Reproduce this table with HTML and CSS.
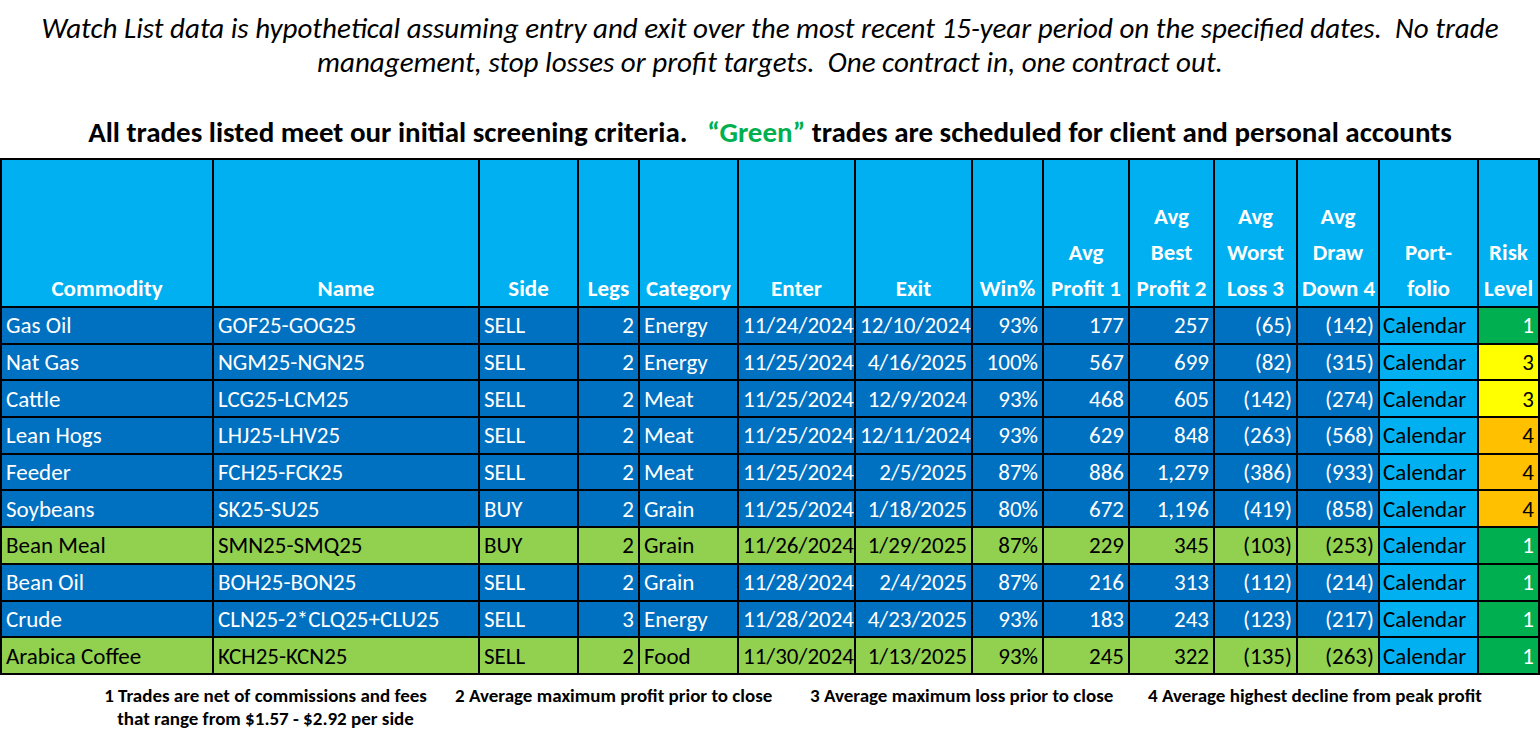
FILE: index.html
```html
<!DOCTYPE html>
<html>
<head>
<meta charset="utf-8">
<link rel="stylesheet" href="styles.css">
</head>
<body>
<div class="page">
  <p class="disclaimer">Watch List data is hypothetical assuming entry and exit over the most recent 15-year period on the specified dates.&nbsp; No trade<br>management, stop losses or profit targets.&nbsp; One contract in, one contract out.</p>
  <p class="headline">All trades listed meet our initial screening criteria.&nbsp;&nbsp; <span class="green-word">“Green”</span> trades are scheduled for client and personal accounts</p>
  <table class="watch">
    <colgroup>
      <col style="width:212px"><col style="width:266px"><col style="width:99px"><col style="width:61px"><col style="width:99px"><col style="width:117px"><col style="width:117px"><col style="width:71px"><col style="width:86px"><col style="width:85px"><col style="width:83px"><col style="width:82px"><col style="width:99px"><col style="width:61px">
    </colgroup>
    <thead>
      <tr>
        <th>Commodity</th><th>Name</th><th>Side</th><th class="thin">Legs</th><th>Category</th><th>Enter</th><th>Exit</th><th>Win%</th><th class="thin">Avg<br>Profit 1</th><th class="thin">Avg<br>Best<br>Profit 2</th><th>Avg<br>Worst<br>Loss 3</th><th class="thin">Avg<br>Draw<br>Down 4</th><th class="thin">Port-<br>folio</th><th>Risk<br>Level</th>
      </tr>
    </thead>
    <tbody>
      <tr class="blue"><td>Gas Oil</td><td>GOF25-GOG25</td><td>SELL</td><td class="r thin">2</td><td>Energy</td><td class="r">11/24/2024</td><td class="r">12/10/2024</td><td class="r">93%</td><td class="r thin">177</td><td class="r thin">257</td><td class="r">(65)</td><td class="r thin">(142)</td><td class="cal thin">Calendar</td><td class="r risk1">1</td></tr>
      <tr class="blue"><td>Nat Gas</td><td>NGM25-NGN25</td><td>SELL</td><td class="r thin">2</td><td>Energy</td><td class="r">11/25/2024</td><td class="r">4/16/2025</td><td class="r">100%</td><td class="r thin">567</td><td class="r thin">699</td><td class="r">(82)</td><td class="r thin">(315)</td><td class="cal thin">Calendar</td><td class="r risk3">3</td></tr>
      <tr class="blue"><td>Cattle</td><td>LCG25-LCM25</td><td>SELL</td><td class="r thin">2</td><td>Meat</td><td class="r">11/25/2024</td><td class="r">12/9/2024</td><td class="r">93%</td><td class="r thin">468</td><td class="r thin">605</td><td class="r">(142)</td><td class="r thin">(274)</td><td class="cal thin">Calendar</td><td class="r risk3">3</td></tr>
      <tr class="blue"><td>Lean Hogs</td><td>LHJ25-LHV25</td><td>SELL</td><td class="r thin">2</td><td>Meat</td><td class="r">11/25/2024</td><td class="r">12/11/2024</td><td class="r">93%</td><td class="r thin">629</td><td class="r thin">848</td><td class="r">(263)</td><td class="r thin">(568)</td><td class="cal thin">Calendar</td><td class="r risk4">4</td></tr>
      <tr class="blue"><td>Feeder</td><td>FCH25-FCK25</td><td>SELL</td><td class="r thin">2</td><td>Meat</td><td class="r">11/25/2024</td><td class="r">2/5/2025</td><td class="r">87%</td><td class="r thin">886</td><td class="r thin">1,279</td><td class="r">(386)</td><td class="r thin">(933)</td><td class="cal thin">Calendar</td><td class="r risk4">4</td></tr>
      <tr class="blue"><td>Soybeans</td><td>SK25-SU25</td><td>BUY</td><td class="r thin">2</td><td>Grain</td><td class="r">11/25/2024</td><td class="r">1/18/2025</td><td class="r">80%</td><td class="r thin">672</td><td class="r thin">1,196</td><td class="r">(419)</td><td class="r thin">(858)</td><td class="cal thin">Calendar</td><td class="r risk4">4</td></tr>
      <tr class="green"><td>Bean Meal</td><td>SMN25-SMQ25</td><td>BUY</td><td class="r thin">2</td><td>Grain</td><td class="r">11/26/2024</td><td class="r">1/29/2025</td><td class="r">87%</td><td class="r thin">229</td><td class="r thin">345</td><td class="r">(103)</td><td class="r thin">(253)</td><td class="cal thin">Calendar</td><td class="r risk1">1</td></tr>
      <tr class="blue"><td>Bean Oil</td><td>BOH25-BON25</td><td>SELL</td><td class="r thin">2</td><td>Grain</td><td class="r">11/28/2024</td><td class="r">2/4/2025</td><td class="r">87%</td><td class="r thin">216</td><td class="r thin">313</td><td class="r">(112)</td><td class="r thin">(214)</td><td class="cal thin">Calendar</td><td class="r risk1">1</td></tr>
      <tr class="blue"><td>Crude</td><td>CLN25-2*CLQ25+CLU25</td><td>SELL</td><td class="r thin">3</td><td>Energy</td><td class="r">11/28/2024</td><td class="r">4/23/2025</td><td class="r">93%</td><td class="r thin">183</td><td class="r thin">243</td><td class="r">(123)</td><td class="r thin">(217)</td><td class="cal thin">Calendar</td><td class="r risk1">1</td></tr>
      <tr class="green"><td>Arabica Coffee</td><td>KCH25-KCN25</td><td>SELL</td><td class="r thin">2</td><td>Food</td><td class="r">11/30/2024</td><td class="r">1/13/2025</td><td class="r">93%</td><td class="r thin">245</td><td class="r thin">322</td><td class="r">(135)</td><td class="r thin">(263)</td><td class="cal thin">Calendar</td><td class="r risk1">1</td></tr>
    </tbody>
  </table>
  <div class="notes">
    <div class="note note1">1 Trades are net of commissions and fees<br>that range from $1.57 - $2.92 per side</div>
    <div class="note note2">2 Average maximum profit prior to close</div>
    <div class="note note3">3 Average maximum loss prior to close</div>
    <div class="note note4">4 Average highest decline from peak profit</div>
  </div>
</div>
</body>
</html>
```

FILE: styles.css
```css
* { box-sizing: border-box; }
html, body { margin: 0; padding: 0; background: #fff; }
body {
  font-family: Carlito, Calibri, "Liberation Sans Narrow", "Noto Sans", sans-serif;
  color: #000;
  width: 1540px;
}
.page { padding-top: 11px; }
.disclaimer {
  margin: 0;
  text-align: center;
  font-style: italic;
  font-size: 29px;
  line-height: 34px;
}
.headline {
  margin: 36px 0 9px;
  text-align: center;
  font-weight: bold;
  font-size: 29px;
  line-height: 34px;
}
.green-word { color: #00b050; }
.watch {
  border-collapse: collapse;
  table-layout: fixed;
  width: 1539px;
  font-size: 23px;
}
.watch th, .watch td {
  border: 2px solid #000;
  padding: 0 4px;
  white-space: nowrap;
  overflow: hidden;
}
.watch th {
  background: #00b0f0;
  color: #fff;
  font-weight: bold;
  height: 148px;
  vertical-align: bottom;
  text-align: center;
  line-height: 36px;
  padding-bottom: 0;
}
.watch th.thin, .watch td.thin { border-left-width: 1px; }
.watch td {
  height: 36.7px;
  line-height: 34px;
  text-align: left;
}
.watch td.r { text-align: right; }
.blue td { background: #0070c0; color: #fff; }
.green td { background: #92d050; color: #000; }
.watch td.cal { background: #00b0f0; color: #000; padding-left: 3px; }
.watch td.risk1 { background: #00b050; color: #fff; }
.watch td.risk3 { background: #ffff00; color: #000; }
.watch td.risk4 { background: #ffc000; color: #000; }
.notes {
  display: flex;
  padding-left: 104px;
  margin-top: 9px;
  font-weight: bold;
  font-size: 19px;
  line-height: 23px;
}
.note1 { width: 351px; padding-right: 28px; text-align: center; }
.note2 { width: 355px; }
.note3 { width: 338px; }
```
